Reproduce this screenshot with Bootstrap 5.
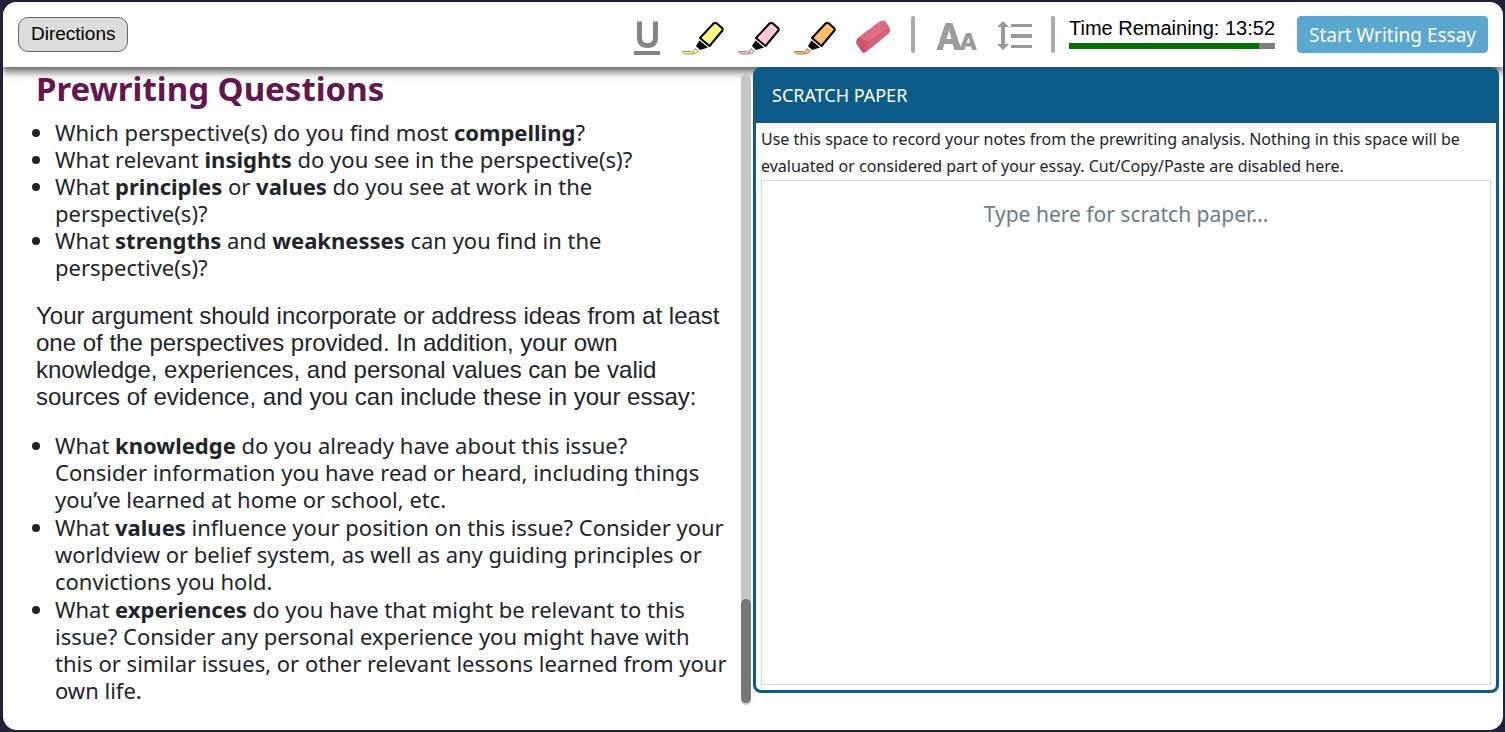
<!DOCTYPE html>
<html lang="en">
<head>
<meta charset="utf-8">
<meta name="viewport" content="width=device-width, initial-scale=1">
<title>Prewriting Questions</title>
<link href="https://cdn.jsdelivr.net/npm/bootstrap@5.3.0/dist/css/bootstrap.min.css" rel="stylesheet">
<style>
  body { background: #212036; font-family: "Noto Sans", sans-serif; color: #212529; padding: 2px 2px 2px 3px; }
  .app-frame { border-radius: 14px; background: #fff; }
  .top-bar { height: 65px; padding: 0 15px; box-shadow: 0 4px 8px 1px rgba(0,0,0,.6); background: #fff; }
  .top-tools { gap: 14px; }
  .arial { font-family: "Liberation Sans", Arial, sans-serif; }
  .btn-directions { --bs-btn-bg: #dcdcdc; --bs-btn-color: #000; --bs-btn-border-color: #666; --bs-btn-hover-bg: #ccc; --bs-btn-padding-x: 12px; --bs-btn-font-size: 19px; --bs-btn-border-radius: 10px; line-height: 25px; height: 35px; padding-top: 3px; }
  .btn-start { --bs-btn-bg: #5aa7d0; --bs-btn-color: #fff; --bs-btn-border-color: #5aa7d0; --bs-btn-hover-bg: #4795bf; --bs-btn-hover-color: #fff; --bs-btn-padding-x: 10px; --bs-btn-font-size: 19px; --bs-btn-border-radius: 4px; width: 191px; height: 37px; line-height: 26px; white-space: nowrap; margin-left: 8px; }
  .tool-btn { border: 0; background: none; padding: 0; width: 44px; height: 44px; }
  .tool-btn svg { display: block; }
  .tool-rule { width: 4px; height: 37px; border-radius: 2px; background: #aaa; }
  .tools-marks { margin-right: 1px; }
  .timer { font-size: 20px; line-height: 24px; color: #000; width: 206px; white-space: nowrap; padding-bottom: 4px; }
  .timer .progress { height: 6px; border-radius: 0; background: #808080; margin-top: 3px; }
  .timer .progress-bar { background: #007300; }
  .work-area { min-height: 0; }
  .passage { padding: 0 10px 0 33px; font-size: 22px; line-height: 27px; overflow: hidden; }
  .passage h1 { font-size: 33px; line-height: 44px; font-weight: 700; color: #64174c; margin-bottom: 8px; }
  .passage ul { padding-left: 19px; margin-bottom: 21px; }
  .passage p { font-size: 24px; margin-bottom: 22px; }
  .long-items li { margin-bottom: 1px; }
  .track { width: 10px; border-radius: 5px; background: #c6c6c6; margin: 7px 2px 25px 0; padding-bottom: 2px; }
  .thumb { height: 104px; border-radius: 5px; background: #777; }
  .side { padding-right: 4px; }
  .scratch { border: 3px solid #0d5b89; border-radius: 8px; margin-bottom: 37px; background: #fff; z-index: 1; }
  .scratch h2 { background: #0d5b89; color: #fff; font-size: 18px; line-height: 51px; padding: 0 0 2px 16px; }
  .scratch label { font-size: 16px; line-height: 27px; padding: 3px 5px 0; }
  .scratch textarea { margin: 0 5px 5px; border: 1px solid #d3d5d7; border-radius: 0; font-size: 21px; line-height: 30px; padding: 18px 12px; resize: none; text-align: center; }
  .scratch textarea::placeholder { color: #6a7d89; opacity: 1; }
</style>
</head>
<body class="vh-100 d-flex flex-column">
<div class="app-frame flex-grow-1 d-flex flex-column overflow-hidden">
  <header class="top-bar d-flex align-items-center flex-shrink-0">
    <button type="button" class="btn btn-directions arial">Directions</button>
    <div class="top-tools d-flex align-items-center ms-auto">
      <div class="d-flex align-items-center gap-3" role="toolbar" aria-label="Text tools">
        <div class="d-flex align-items-center gap-2 tools-marks">
          <button type="button" class="tool-btn me-1" aria-label="Underline">
            <svg width="44" height="44" viewBox="0 0 44 44"><path d="M13.500 8.500V24C13.500 30 16 32.500 21.500 32.500S29.500 30 29.500 24V8.500" fill="none" stroke="#858585" stroke-width="5"/><path d="M8 38h26v4H8z" fill="#858585"/></svg>
          </button>
          <button type="button" class="tool-btn" aria-label="Yellow highlighter">
            <svg width="44" height="44" viewBox="0 0 44 44"><path d="M0 38.500h9l2.500 2.500H3z" fill="#ffff85" stroke="#8b8540" stroke-width=".8"/><path d="M17.500 27.500l8.500 7-8 2.500-4-4z" fill="#000"/><path d="M31.500 10.500q2-1 3.500 0l5 4.500q1.500 1.500 0 3L27.500 33l-9.500-8z" fill="#ffff85" stroke="#000" stroke-width="2" stroke-linejoin="round"/><path d="M13 35.500l3.500 2.500-3 3-3-2z" fill="#ffff85" stroke="#555" stroke-width=".6"/></svg>
          </button>
          <button type="button" class="tool-btn ms-1" aria-label="Pink highlighter">
            <svg width="44" height="44" viewBox="0 0 44 44"><path d="M0 38.500h9l2.500 2.500H3z" fill="#ffc0c0" stroke="#a87070" stroke-width=".8"/><path d="M17.500 27.500l8.500 7-8 2.500-4-4z" fill="#000"/><path d="M31.500 10.500q2-1 3.500 0l5 4.500q1.500 1.500 0 3L27.500 33l-9.500-8z" fill="#ffc5d9" stroke="#000" stroke-width="2" stroke-linejoin="round"/><path d="M13 35.500l3.500 2.500-3 3-3-2z" fill="#ffc5d9" stroke="#555" stroke-width=".6"/></svg>
          </button>
          <button type="button" class="tool-btn ms-1" aria-label="Orange highlighter">
            <svg width="44" height="44" viewBox="0 0 44 44"><path d="M0 38.500h9l2.500 2.500H3z" fill="#ffb85c" stroke="#9b6c2c" stroke-width=".8"/><path d="M17.500 27.500l8.500 7-8 2.500-4-4z" fill="#000"/><path d="M31.500 10.500q2-1 3.500 0l5 4.500q1.500 1.500 0 3L27.500 33l-9.500-8z" fill="#fdbd6b" stroke="#000" stroke-width="2" stroke-linejoin="round"/><path d="M13 35.500l3.500 2.500-3 3-3-2z" fill="#fdbd6b" stroke="#555" stroke-width=".6"/></svg>
          </button>
          <button type="button" class="tool-btn ms-1" aria-label="Eraser">
            <svg width="44" height="44" viewBox="0 0 44 44"><path d="M8 25L29 9q4-2 6-1l4.500 7q1 3-1 5.500L16 39q-3 2-4 0L6.500 31q-1-4 1.500-6z" fill="#cc546d"/><path d="M8 25L29 9q4-2 6-1l4.500 6.500L19 28.500z" fill="#db6d84"/><path d="M19 28.500L39.500 15q1 3-1 5.500L15 39.500z" fill="#d4607a"/></svg>
          </button>
        </div>
        <div class="tool-rule"></div>
        <button type="button" class="tool-btn" aria-label="Text size">
          <svg width="44" height="44" viewBox="0 0 44 44" fill="#9c9c9c" fill-rule="evenodd" overflow="visible"><path d="M14.500 10h7l9 27h-7l-2-6h-8l-2 6h-6zM18 17l-2.500 9h5z"/><path d="M35 20h5l6 17h-5l-1-3.500h-5.500l-1 3.500H28zM37.500 24.500l-2 5.500H39z"/></svg>
        </button>
        <button type="button" class="tool-btn" aria-label="Line spacing">
          <svg width="44" height="44" viewBox="0 0 44 44" fill="#999"><path d="M12 8l6 6h-4v17h4l-6 6-6-6h4V14H6zM20 11h21v3H20zM20 21h21v4H20zM20 32h21v3H20z"/></svg>
        </button>
        <div class="tool-rule"></div>
      </div>
      <div class="timer arial">Time Remaining: 13:52
        <div class="progress" role="progressbar" aria-label="Time remaining" aria-valuenow="92" aria-valuemin="0" aria-valuemax="100"><div class="progress-bar" style="width:92%"></div></div>
      </div>
      <button type="button" class="btn btn-start d-flex align-items-center justify-content-center">Start Writing Essay</button>
    </div>
  </header>
  <main class="work-area row g-0 flex-grow-1">
    <section class="col-6 d-flex h-100">
      <div class="passage flex-grow-1">
        <h1>Prewriting Questions</h1>
        <ul>
          <li>Which perspective(s) do you find most <strong>compelling</strong>?</li>
          <li>What relevant <strong>insights</strong> do you see in the perspective(s)?</li>
          <li>What <strong>principles</strong> or <strong>values</strong> do you see at work in the perspective(s)?</li>
          <li>What <strong>strengths</strong> and <strong>weaknesses</strong> can you find in the perspective(s)?</li>
        </ul>
        <p class="arial">Your argument should incorporate or address ideas from at least one of the perspectives provided. In addition, your own knowledge, experiences, and personal values can be valid sources of evidence, and you can include these in your essay:</p>
        <ul class="long-items">
          <li>What <strong>knowledge</strong> do you already have about this issue?<br>Consider information you have read or heard, including things you’ve learned at home or school, etc.</li>
          <li>What <strong>values</strong> influence your position on this issue? Consider your worldview or belief system, as well as any guiding principles or convictions you hold.</li>
          <li>What <strong>experiences</strong> do you have that might be relevant to this issue? Consider any personal experience you might have with this or similar issues, or other relevant lessons learned from your own life.</li>
        </ul>
      </div>
      <div class="track d-flex flex-column justify-content-end flex-shrink-0"><div class="thumb"></div></div>
    </section>
    <section class="side col-6 d-flex flex-column h-100">
      <div class="scratch position-relative flex-grow-1 d-flex flex-column">
        <h2 class="mb-0 fw-normal">SCRATCH PAPER</h2>
        <label for="notes">Use this space to record your notes from the prewriting analysis. Nothing in this space will be evaluated or considered part of your essay. Cut/Copy/Paste are disabled here.</label>
        <textarea id="notes" class="flex-grow-1" placeholder="Type here for scratch paper..."></textarea>
      </div>
    </section>
  </main>
</div>
<script src="https://cdn.jsdelivr.net/npm/bootstrap@5.3.0/dist/js/bootstrap.bundle.min.js"></script>
</body>
</html>
